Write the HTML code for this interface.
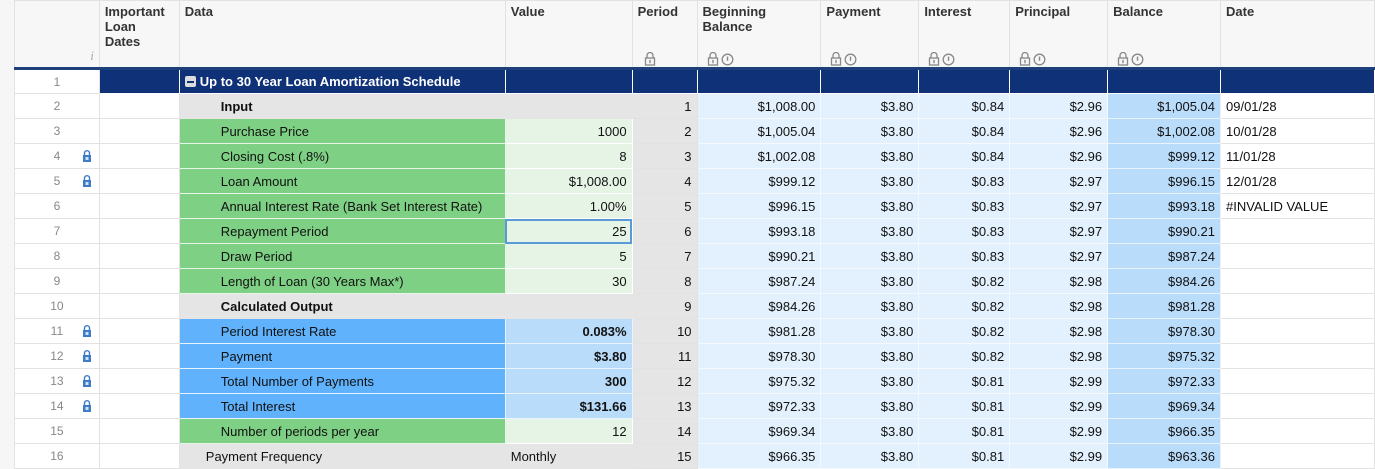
<!DOCTYPE html>
<html><head><meta charset="utf-8"><style>
body{margin:0;width:1375px;height:468px;overflow:hidden;background:#f6f6f6;font-family:"Liberation Sans",Arial,sans-serif;font-size:13px;color:#111}
table{position:absolute;left:14px;top:0;border-collapse:collapse;table-layout:fixed}
td,th{padding:0 5px;border:1px solid #e2e2e2;white-space:nowrap;overflow:hidden;box-sizing:border-box}
th{height:68px;background:#f7f7f7;vertical-align:top;text-align:left;font-weight:bold;color:#333;padding-top:3px;line-height:15px;position:relative;border-bottom:3px solid #1d3f7a}
tr{height:25px}
td.n{background:#fff;color:#888;text-align:center;padding:0;position:relative;font-size:12px}
td.w{background:#fff}
.nav td{background:#0e3178;color:#fff;border-color:#fff}
.nav td.n{background:#fff;color:#888;border-color:#e2e2e2}
.p{background:#e5e5e5;text-align:right}
.b{background:#e2f1fd;text-align:right;border-color:#f4f9fd}
.bl{background:#b9dcfb;text-align:right;border-color:#e8f3fd}
.g{background:#7ed184;padding-left:41px;border-color:#eaf5ea}
.gv{background:#e6f4e6;text-align:right;border-color:#fff}
.u{background:#5fb2fb;padding-left:41px;border-color:#e8f3fd}
.uv{background:#b9dcfb;text-align:right;font-weight:bold;border-color:#e8f3fd}
.gr{background:#e5e5e5;border-color:#e5e5e5}
.lk{position:absolute;left:67px;top:6px}
.hi{position:absolute;left:9px;top:51px}
.sel{outline:2px solid #5b9ad8;outline-offset:-2px}
</style></head><body>
<svg width="0" height="0" style="position:absolute"><defs>
<g id="L"><path d="M2.5 5V3.2a2.5 2.5 0 0 1 5 0V5" fill="none" stroke="#3d7cc7" stroke-width="1.4"/><rect x="1" y="5" width="8" height="7" fill="#3d7cc7"/><rect x="3.5" y="7" width="3" height="3" fill="#cfe2f7"/></g>
<g id="H"><path d="M3 5.5V3.5a3 3 0 0 1 6 0V5.5" fill="none" stroke="#888" stroke-width="1.3"/><rect x="1.5" y="6" width="9" height="7" fill="none" stroke="#888" stroke-width="1.3"/><rect x="5.3" y="7.8" width="1.4" height="3.4" fill="#888"/></g>
<g id="I"><circle cx="6.5" cy="7.5" r="5.3" fill="none" stroke="#888" stroke-width="1.3"/><rect x="5.8" y="4.6" width="1.4" height="4.2" fill="#888"/></g>
</defs></svg>
<table>
<colgroup><col style="width:85px"><col style="width:80px"><col style="width:326px"><col style="width:127px"><col style="width:65px"><col style="width:124px"><col style="width:98px"><col style="width:91px"><col style="width:98px"><col style="width:113px"><col style="width:154px"></colgroup>
<tr><th style="text-align:right;color:#aaa;font-style:italic;font-weight:normal;font-family:'Liberation Serif',serif;vertical-align:bottom;padding-bottom:4px">i</th><th>Important<br>Loan<br>Dates</th><th>Data</th><th>Value</th><th>Period<svg class="hi" width="13" height="15" style="left:11px"><use href="#H"/></svg></th><th>Beginning<br>Balance<svg class="hi" width="30" height="15"><use href="#H"/><use href="#I" x="14"/></svg></th><th>Payment<svg class="hi" width="30" height="15"><use href="#H"/><use href="#I" x="14"/></svg></th><th>Interest<svg class="hi" width="30" height="15"><use href="#H"/><use href="#I" x="14"/></svg></th><th>Principal<svg class="hi" width="30" height="15"><use href="#H"/><use href="#I" x="14"/></svg></th><th>Balance<svg class="hi" width="30" height="15"><use href="#H"/><use href="#I" x="14"/></svg></th><th>Date</th></tr>
<tr class="nav"><td class="n">1</td><td></td><td style="font-weight:bold"><span style="display:inline-block;width:11px;height:11px;background:#ddd;border-radius:2px;position:relative;top:1px;margin-right:4px;vertical-align:baseline"><span style="position:absolute;left:2px;top:5px;width:7px;height:1.5px;background:#0e3178"></span></span>Up to 30 Year Loan Amortization Schedule</td><td></td><td></td><td></td><td></td><td></td><td></td><td></td><td></td></tr>
<tr><td class="n">2</td><td class="w"></td><td class="gr" style="padding-left:41px;font-weight:bold">Input</td><td class="gr"></td><td class="p">1</td><td class="b">$1,008.00</td><td class="b">$3.80</td><td class="b">$0.84</td><td class="b">$2.96</td><td class="bl">$1,005.04</td><td class="w">09/01/28</td></tr>
<tr><td class="n">3</td><td class="w"></td><td class="g">Purchase Price</td><td class="gv">1000</td><td class="p">2</td><td class="b">$1,005.04</td><td class="b">$3.80</td><td class="b">$0.84</td><td class="b">$2.96</td><td class="bl">$1,002.08</td><td class="w">10/01/28</td></tr>
<tr><td class="n">4<svg class="lk" width="10" height="12"><use href="#L"/></svg></td><td class="w"></td><td class="g">Closing Cost (.8%)</td><td class="gv">8</td><td class="p">3</td><td class="b">$1,002.08</td><td class="b">$3.80</td><td class="b">$0.84</td><td class="b">$2.96</td><td class="bl">$999.12</td><td class="w">11/01/28</td></tr>
<tr><td class="n">5<svg class="lk" width="10" height="12"><use href="#L"/></svg></td><td class="w"></td><td class="g">Loan Amount</td><td class="gv">$1,008.00</td><td class="p">4</td><td class="b">$999.12</td><td class="b">$3.80</td><td class="b">$0.83</td><td class="b">$2.97</td><td class="bl">$996.15</td><td class="w">12/01/28</td></tr>
<tr><td class="n">6</td><td class="w"></td><td class="g">Annual Interest Rate (Bank Set Interest Rate)</td><td class="gv">1.00%</td><td class="p">5</td><td class="b">$996.15</td><td class="b">$3.80</td><td class="b">$0.83</td><td class="b">$2.97</td><td class="bl">$993.18</td><td class="w">#INVALID VALUE</td></tr>
<tr><td class="n">7</td><td class="w"></td><td class="g">Repayment Period</td><td class="gv sel">25</td><td class="p">6</td><td class="b">$993.18</td><td class="b">$3.80</td><td class="b">$0.83</td><td class="b">$2.97</td><td class="bl">$990.21</td><td class="w"></td></tr>
<tr><td class="n">8</td><td class="w"></td><td class="g">Draw Period</td><td class="gv">5</td><td class="p">7</td><td class="b">$990.21</td><td class="b">$3.80</td><td class="b">$0.83</td><td class="b">$2.97</td><td class="bl">$987.24</td><td class="w"></td></tr>
<tr><td class="n">9</td><td class="w"></td><td class="g">Length of Loan (30 Years Max*)</td><td class="gv">30</td><td class="p">8</td><td class="b">$987.24</td><td class="b">$3.80</td><td class="b">$0.82</td><td class="b">$2.98</td><td class="bl">$984.26</td><td class="w"></td></tr>
<tr><td class="n">10</td><td class="w"></td><td class="gr" style="padding-left:41px;font-weight:bold">Calculated Output</td><td class="gr"></td><td class="p">9</td><td class="b">$984.26</td><td class="b">$3.80</td><td class="b">$0.82</td><td class="b">$2.98</td><td class="bl">$981.28</td><td class="w"></td></tr>
<tr><td class="n">11<svg class="lk" width="10" height="12"><use href="#L"/></svg></td><td class="w"></td><td class="u">Period Interest Rate</td><td class="uv">0.083%</td><td class="p">10</td><td class="b">$981.28</td><td class="b">$3.80</td><td class="b">$0.82</td><td class="b">$2.98</td><td class="bl">$978.30</td><td class="w"></td></tr>
<tr><td class="n">12<svg class="lk" width="10" height="12"><use href="#L"/></svg></td><td class="w"></td><td class="u">Payment</td><td class="uv">$3.80</td><td class="p">11</td><td class="b">$978.30</td><td class="b">$3.80</td><td class="b">$0.82</td><td class="b">$2.98</td><td class="bl">$975.32</td><td class="w"></td></tr>
<tr><td class="n">13<svg class="lk" width="10" height="12"><use href="#L"/></svg></td><td class="w"></td><td class="u">Total Number of Payments</td><td class="uv">300</td><td class="p">12</td><td class="b">$975.32</td><td class="b">$3.80</td><td class="b">$0.81</td><td class="b">$2.99</td><td class="bl">$972.33</td><td class="w"></td></tr>
<tr><td class="n">14<svg class="lk" width="10" height="12"><use href="#L"/></svg></td><td class="w"></td><td class="u">Total Interest</td><td class="uv">$131.66</td><td class="p">13</td><td class="b">$972.33</td><td class="b">$3.80</td><td class="b">$0.81</td><td class="b">$2.99</td><td class="bl">$969.34</td><td class="w"></td></tr>
<tr><td class="n">15</td><td class="w"></td><td class="g">Number of periods per year</td><td class="gv">12</td><td class="p">14</td><td class="b">$969.34</td><td class="b">$3.80</td><td class="b">$0.81</td><td class="b">$2.99</td><td class="bl">$966.35</td><td class="w"></td></tr>
<tr><td class="n">16</td><td class="w"></td><td class="gr" style="padding-left:26px">Payment Frequency</td><td class="gr">Monthly</td><td class="p">15</td><td class="b">$966.35</td><td class="b">$3.80</td><td class="b">$0.81</td><td class="b">$2.99</td><td class="bl">$963.36</td><td class="w"></td></tr>
</table>
</body></html>
